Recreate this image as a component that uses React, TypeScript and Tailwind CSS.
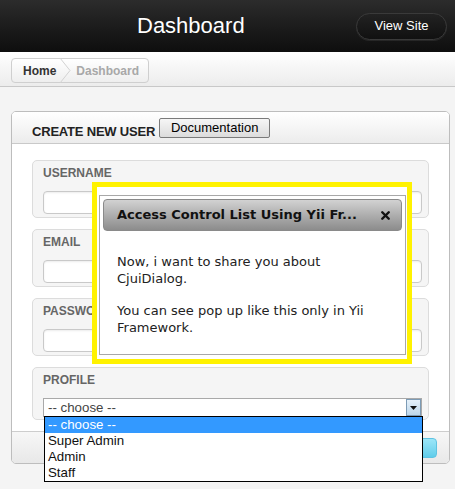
import { X } from "lucide-react";

const fields = ["USERNAME", "EMAIL", "PASSWORD"];

function Field({ label }: { label: string }) {
  return (
    <div className="mb-[11px] h-[58px] w-[397px] rounded-[5px] border border-[#dcdcdc] bg-[#f5f5f5] pl-[10px] pt-[5px]">
      <div className="text-[12px] leading-[14px] font-bold text-[#666]">{label}</div>
      <div className="mt-[11px] h-[23px] w-[379px] rounded-[4px] border border-[#c9c9c9] bg-white shadow-[inset_0_1px_2px_rgba(0,0,0,0.08)]" />
    </div>
  );
}

function App() {
  return (
    <div className="relative h-[489px] w-[455px] overflow-hidden bg-[#f4f4f4] font-['Liberation_Sans',Arial,sans-serif]">
      {/* top bar */}
      <header className="flex h-[52px] items-center bg-gradient-to-b from-[#2c2c2c] to-[#0e0e0e] pl-[137px] pr-[8px]">
        <h1 className="text-[22px] leading-none text-white">Dashboard</h1>
        <button className="ml-auto h-[27px] w-[91px] rounded-full border border-[#3a3a3a] bg-gradient-to-b from-[#222] to-[#111] text-[13px] text-white shadow-[0_1px_0_rgba(255,255,255,0.08)]">
          View Site
        </button>
      </header>

      {/* breadcrumb */}
      <div className="h-[35px] border-b border-[#c8c8c8] bg-gradient-to-b from-white to-[#ececec] pl-[11px] pt-[6px]">
        <div className="flex h-[25px] w-[138px] items-center rounded-[4px] border border-[#cfcfcf] bg-gradient-to-b from-white to-[#eeeeee] text-[12px] font-bold">
          <span className="pl-[11px] text-[#333]">Home</span>
          <svg width="13" height="25" viewBox="0 0 13 25" className="ml-[3px]">
            <path d="M1 0 L11 12.5 L1 25" fill="none" stroke="#d2d2d2" />
          </svg>
          <span className="pl-[4px] text-[#a8a8a8]">Dashboard</span>
        </div>
      </div>

      {/* panel */}
      <div className="ml-[11px] mt-[24px] w-[439px] overflow-hidden rounded-[5px] border border-[#bdbdbd] bg-white">
        <div className="flex h-[32px] items-end border-b border-[#c9c9c9] bg-gradient-to-b from-white to-[#ececec] pb-[5px] pl-[20px]">
          <span className="text-[13px] leading-[13px] font-bold tracking-[-0.2px] text-[#222]">CREATE NEW USER</span>
          <button className="ml-[4px] h-[20px] w-[111px] rounded-[2px] border border-[#7a7a7a] bg-gradient-to-b from-[#f6f6f6] to-[#dcdcdc] text-[13px] leading-[18px] text-black">
            Documentation
          </button>
        </div>

        <div className="bg-white pb-[11px] pl-[20px] pt-[16px]">
          {fields.map((f) => (
            <Field key={f} label={f} />
          ))}
          <div className="h-[53px] w-[397px] rounded-[5px] border border-[#dcdcdc] bg-[#f5f5f5] pl-[10px] pt-[5px]">
            <div className="text-[12px] leading-[14px] font-bold text-[#666]">PROFILE</div>
            <div className="mt-[11px] flex h-[19px] w-[379px] items-center border border-[#a9a9a9] bg-white">
              <span className="pl-[4px] text-[13.3px] text-[#444]">-- choose --</span>
              <span className="ml-auto flex h-[17px] w-[15px] items-center justify-center border border-[#7d9bb5] bg-gradient-to-b from-[#e6f1fa] to-[#bcd6ea]">
                <svg width="7" height="4" viewBox="0 0 7 4">
                  <path d="M0 0 H7 L3.5 4 Z" fill="#111" />
                </svg>
              </span>
            </div>
          </div>
        </div>

        <div className="flex h-[32px] justify-end border-t border-[#cdcdcd] bg-gradient-to-b from-[#f7f7f7] to-[#e8e8e8] pr-[12px] pt-[6px]">
          <button className="h-[20px] w-[80px] rounded-[4px] border border-[#5fc3e2] bg-gradient-to-b from-[#9be6f8] to-[#5fcdea]" />
        </div>
      </div>

      {/* highlighted dialog */}
      <div className="absolute left-[92px] top-[182px] h-[182px] w-[320px] border-[5px] border-[#fff200] bg-white">
        <div className="ml-[2px] mt-[8px] h-[160px] w-[307px] border border-[#a8a8a8] bg-white p-[3px] font-['DejaVu_Sans',Verdana,sans-serif]">
          <div className="flex h-[32px] items-center rounded-[4px] border border-[#8a8a8a] bg-gradient-to-b from-[#d2d2d2] to-[#8c8c8c] pl-[13px] pr-[9px]">
            <span className="text-[13px] font-bold text-[#111]">Access Control List Using Yii Fr...</span>
            <X className="ml-auto" size={13} strokeWidth={4.5} color="#111" />
          </div>
          <div className="pl-[14px] pt-[22px] text-[13px] leading-[17px] text-[#222]">
            <p>
              Now, i want to share you about
              <br />
              CjuiDialog.
            </p>
            <p className="mt-[15px]">
              You can see pop up like this only in Yii
              <br />
              Framework.
            </p>
          </div>
        </div>
      </div>

      {/* open select list */}
      <ul className="absolute left-[44px] top-[416px] w-[379px] border border-black bg-white text-[13.3px] leading-[16px] text-[#111]">
        <li className="bg-[#3399ff] pl-[3px] text-white">-- choose --</li>
        <li className="pl-[3px]">Super Admin</li>
        <li className="pl-[3px]">Admin</li>
        <li className="pl-[3px]">Staff</li>
      </ul>
    </div>
  );
}

export default App;
